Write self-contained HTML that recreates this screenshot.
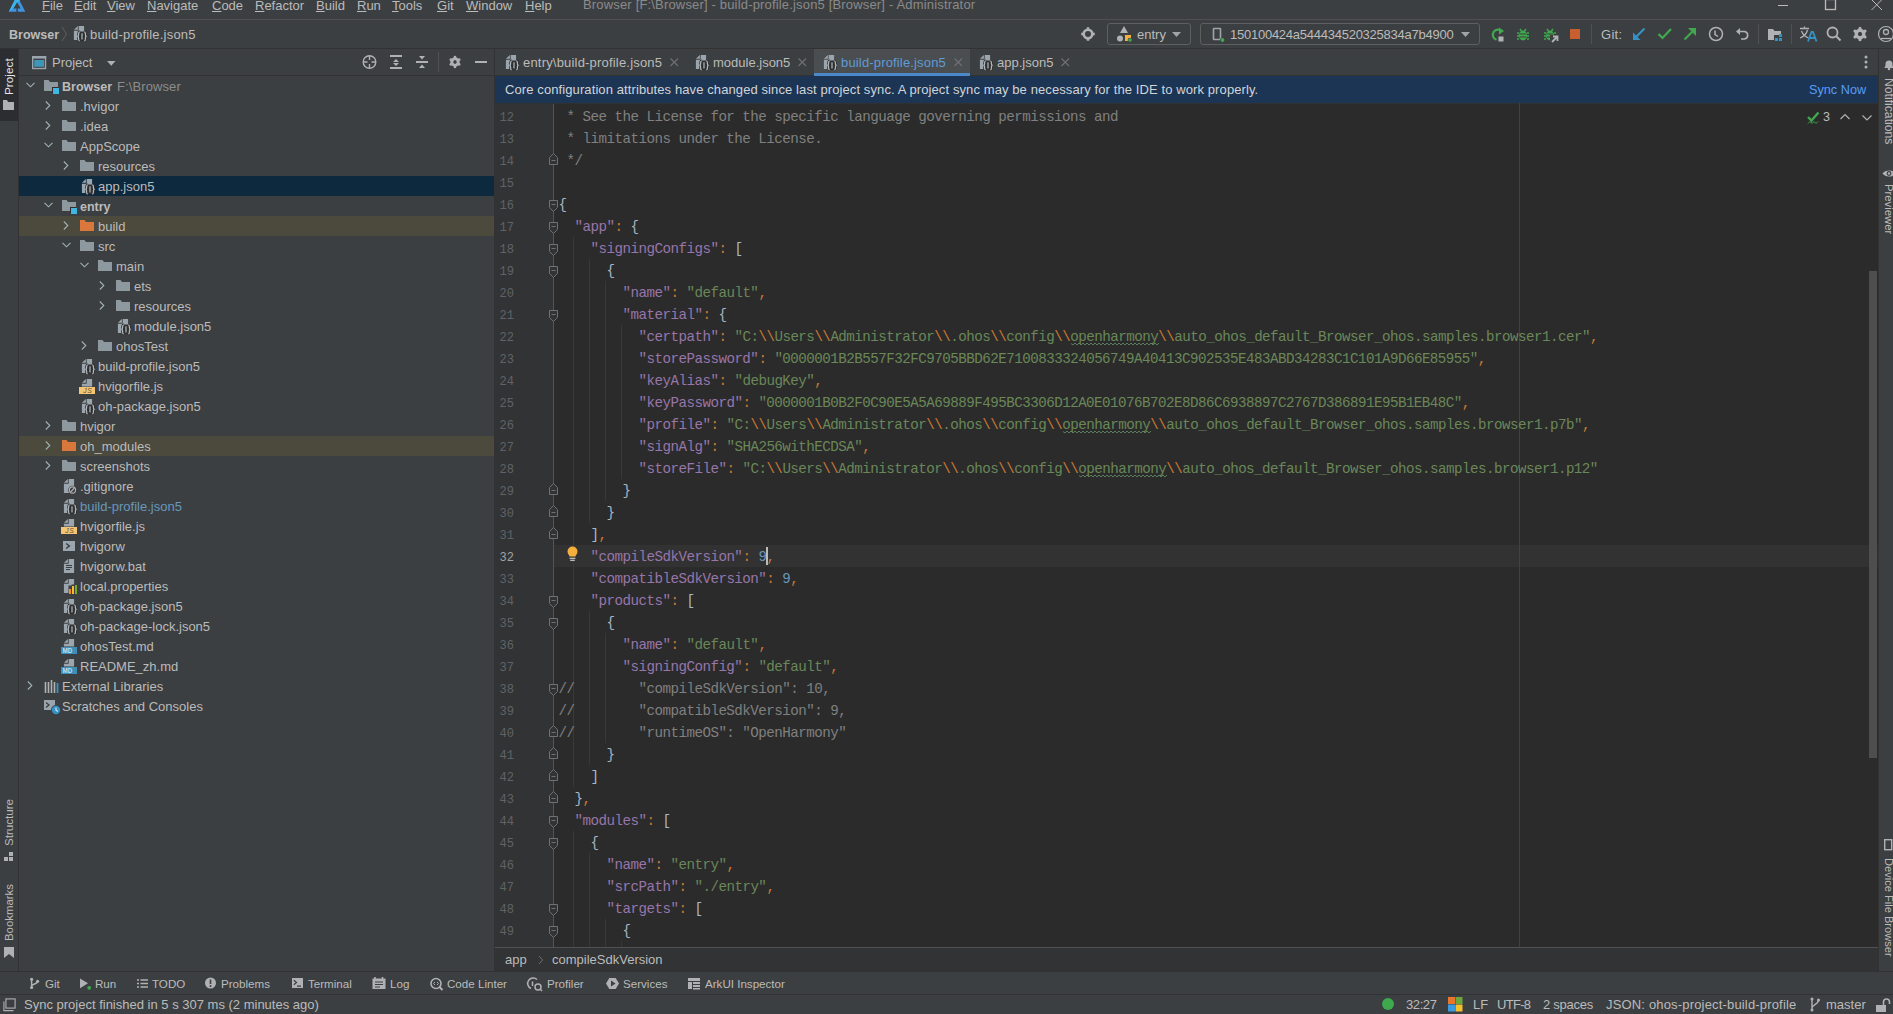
<!DOCTYPE html><html><head><meta charset="utf-8"><title>DevEco</title><style>
*{margin:0;padding:0;box-sizing:border-box}
html,body{width:1893px;height:1014px;overflow:hidden;background:#3c3f41;font-family:"Liberation Sans",sans-serif;font-size:13px;color:#bbbbbb;position:relative}
.a{position:absolute}
.t{position:absolute;white-space:pre;line-height:16px}
.code{position:absolute;white-space:pre;font-family:"Liberation Mono",monospace;font-size:14.2px;letter-spacing:-0.52px;line-height:22px;color:#a9b7c6}
.k{color:#9876aa}.s{color:#6a8759}.n{color:#6897bb}.p{color:#cc7832}.c{color:#808080}
.ln{position:absolute;font-family:"Liberation Mono",monospace;font-size:12px;color:#606366;text-align:right;width:30px;line-height:22px}
svg{position:absolute;overflow:visible}
.vt{position:absolute;white-space:pre;line-height:14px;font-size:12px;transform-origin:0 0}
</style></head><body>
<div class="a" style="left:0px;top:19px;width:1893px;height:1px;background:#505050;"></div>
<div class="a" style="left:0px;top:48px;width:1893px;height:1px;background:#323232;"></div>
<div class="a" style="left:0px;top:49px;width:18px;height:922px;background:#3c3f41;"></div>
<div class="a" style="left:18px;top:49px;width:1px;height:922px;background:#323232;"></div>
<div class="a" style="left:0px;top:49px;width:18px;height:72px;background:#2b2d30;"></div>
<div class="a" style="left:19px;top:75px;width:475px;height:1px;background:#323232;"></div>
<div class="a" style="left:494px;top:49px;width:1px;height:922px;background:#323232;"></div>
<div class="a" style="left:495px;top:49px;width:1383px;height:26px;background:#3c3f41;"></div>
<div class="a" style="left:495px;top:75px;width:1383px;height:1px;background:#323232;"></div>
<div class="a" style="left:814px;top:49px;width:156px;height:26px;background:#4b4e50;"></div>
<div class="a" style="left:814px;top:73px;width:156px;height:3px;background:#4a88c7;"></div>
<div class="a" style="left:495px;top:76px;width:1383px;height:27px;background:#1d3554;"></div>
<div class="a" style="left:495px;top:103px;width:58px;height:844px;background:#313335;"></div>
<div class="a" style="left:553px;top:103px;width:1px;height:844px;background:#555555;"></div>
<div class="a" style="left:554px;top:103px;width:1324px;height:844px;background:#2b2b2b;"></div>
<div class="a" style="left:495px;top:103px;width:1383px;height:1px;background:#303030;"></div>
<div class="a" style="left:1519px;top:103px;width:1px;height:844px;background:#414141;"></div>
<div class="a" style="left:495px;top:947px;width:1383px;height:1px;background:#515151;"></div>
<div class="a" style="left:495px;top:948px;width:1383px;height:23px;background:#313335;"></div>
<div class="a" style="left:1878px;top:49px;width:1px;height:922px;background:#323232;"></div>
<div class="a" style="left:1879px;top:49px;width:14px;height:922px;background:#3c3f41;"></div>
<div class="a" style="left:0px;top:971px;width:1893px;height:1px;background:#323232;"></div>
<div class="a" style="left:0px;top:994px;width:1893px;height:1px;background:#323232;"></div>
<svg style="left:8px;top:0px" width="18" height="13" viewBox="0 0 18 13"><path d="M9 -4.5L17.3 11.8H.8Z M9 2.2L5.2 8.4H12.8Z" fill="#3f93e0" fill-rule="evenodd"/><path d="M9 -4.5L12 1.3L9 2.2L5.2 8.4L.8 11.8Z" fill="#3bb4ee"/><rect x="8.4" y="8.2" width="1.4" height="4" fill="#3c3f41"/></svg>
<div class="t" style="left:42px;top:-2px;color:#bbbbbb"><span style="text-decoration:underline;text-underline-offset:1px">F</span>ile</div>
<div class="t" style="left:74px;top:-2px;color:#bbbbbb"><span style="text-decoration:underline;text-underline-offset:1px">E</span>dit</div>
<div class="t" style="left:107px;top:-2px;color:#bbbbbb"><span style="text-decoration:underline;text-underline-offset:1px">V</span>iew</div>
<div class="t" style="left:147px;top:-2px;color:#bbbbbb"><span style="text-decoration:underline;text-underline-offset:1px">N</span>avigate</div>
<div class="t" style="left:212px;top:-2px;color:#bbbbbb"><span style="text-decoration:underline;text-underline-offset:1px">C</span>ode</div>
<div class="t" style="left:255px;top:-2px;color:#bbbbbb"><span style="text-decoration:underline;text-underline-offset:1px">R</span>efactor</div>
<div class="t" style="left:316px;top:-2px;color:#bbbbbb"><span style="text-decoration:underline;text-underline-offset:1px">B</span>uild</div>
<div class="t" style="left:357px;top:-2px;color:#bbbbbb"><span style="text-decoration:underline;text-underline-offset:1px">R</span>un</div>
<div class="t" style="left:392px;top:-2px;color:#bbbbbb"><span style="text-decoration:underline;text-underline-offset:1px">T</span>ools</div>
<div class="t" style="left:437px;top:-2px;color:#bbbbbb"><span style="text-decoration:underline;text-underline-offset:1px">G</span>it</div>
<div class="t" style="left:466px;top:-2px;color:#bbbbbb"><span style="text-decoration:underline;text-underline-offset:1px">W</span>indow</div>
<div class="t" style="left:525px;top:-2px;color:#bbbbbb"><span style="text-decoration:underline;text-underline-offset:1px">H</span>elp</div>
<div class="t" style="left:583px;top:-3px;color:#8a8a8a;letter-spacing:.17px">Browser [F:\Browser] - build-profile.json5 [Browser] - Administrator</div>
<div class="a" style="left:1778px;top:5px;width:10px;height:1px;background:#bbbbbb;"></div>
<svg style="left:1825px;top:0px" width="11" height="11" viewBox="0 0 11 11"><rect x=".5" y="-.5" width="10" height="10" fill="none" stroke="#bbbbbb" stroke-width="1.3"/></svg>
<svg style="left:1871px;top:0px" width="12" height="11" viewBox="0 0 12 11"><path d="M.5 -.5L11 10M11 -.5L.5 10" stroke="#bbbbbb" stroke-width="1"/></svg>
<div class="t" style="left:9px;top:27px;font-weight:bold;font-size:12.5px">Browser</div>
<svg style="left:61px;top:26px" width="8" height="16" viewBox="0 0 8 16"><path d="M1 1L5.5 8L1 15" fill="none" stroke="#5e6062" stroke-width="1"/></svg>
<svg style="left:71px;top:24px" width="16" height="16" viewBox="0 0 16 16"><path d="M2.9 5.7L6.9 1.9V5.7Z" fill="#9aa5ad"/><path d="M7.7 2H13.1V16H2.9V6.8H7.7Z" fill="#9aa5ad"/><rect x="6.6" y="7.6" width="8.8" height="9.6" rx="2.5" fill="#2f3133"/><path d="M8.8 7.8C7.7 7.8 7.6 8.6 7.6 9.8V11C7.6 11.9 7.1 12.4 6.3 12.4C7.1 12.4 7.6 12.9 7.6 13.8V15C7.6 16.2 7.7 17 8.8 17M13.2 7.8C14.3 7.8 14.4 8.6 14.4 9.8V11C14.4 11.9 14.9 12.4 15.7 12.4C14.9 12.4 14.4 12.9 14.4 13.8V15C14.4 16.2 14.3 17 13.2 17M11 9.3V15.5" fill="none" stroke="#2f3133" stroke-width="2.4"/><path d="M8.8 7.8C7.7 7.8 7.6 8.6 7.6 9.8V11C7.6 11.9 7.1 12.4 6.3 12.4C7.1 12.4 7.6 12.9 7.6 13.8V15C7.6 16.2 7.7 17 8.8 17M13.2 7.8C14.3 7.8 14.4 8.6 14.4 9.8V11C14.4 11.9 14.9 12.4 15.7 12.4C14.9 12.4 14.4 12.9 14.4 13.8V15C14.4 16.2 14.3 17 13.2 17M11 9.3V15.5" fill="none" stroke="#b4b9bd" stroke-width="1.2"/></svg>
<div class="t" style="left:90px;top:27px;letter-spacing:.2px">build-profile.json5</div>
<svg style="left:1080px;top:26px" width="16" height="16" viewBox="0 0 16 16"><circle cx="8" cy="8" r="4.3" fill="none" stroke="#afb1b3" stroke-width="2.6"/><path d="M8 1.2V3.2M8 12.8V14.8M1.2 8H3.2M12.8 8H14.8" stroke="#afb1b3" stroke-width="2.6"/></svg>
<div class="a" style="left:1107px;top:23px;width:84px;height:22px;border:1px solid #5e6060;border-radius:3px"></div>
<svg style="left:1116px;top:25px" width="18" height="18" viewBox="0 0 18 18"><path d="M8 1L12 8H4Z" fill="#afb1b3"/><circle cx="4" cy="13.5" r="3" fill="#afb1b3"/><rect x="9" y="10" width="6" height="6" fill="#f4af3d"/><circle cx="14" cy="15" r="2.3" fill="#3c3f41"/><circle cx="14" cy="15" r="1.8" fill="#3fa94e"/></svg>
<div class="t" style="left:1137px;top:27px;">entry</div>
<svg style="left:1172px;top:32px" width="10" height="6" viewBox="0 0 10 6"><path d="M0 0H9L4.5 5Z" fill="#9da5a8"/></svg>
<div class="a" style="left:1200px;top:23px;width:280px;height:22px;border:1px solid #5e6060;border-radius:3px"></div>
<svg style="left:1212px;top:27px" width="14" height="16" viewBox="0 0 14 16"><rect x="1.5" y="1.5" width="7" height="11" fill="none" stroke="#9da5a8" stroke-width="1.6" rx=".5"/><circle cx="10.5" cy="13" r="2.5" fill="#3c3f41"/><circle cx="10.5" cy="13" r="1.9" fill="#3fa94e"/></svg>
<div class="t" style="left:1230px;top:27px;letter-spacing:-.25px">150100424a544434520325834a7b4900</div>
<svg style="left:1461px;top:32px" width="10" height="6" viewBox="0 0 10 6"><path d="M0 0H9L4.5 5Z" fill="#9da5a8"/></svg>
<svg style="left:1490px;top:26px" width="16" height="16" viewBox="0 0 16 16"><path d="M12 5.5A5.2 5.2 0 1 0 6.5 13.8" fill="none" stroke="#3fa94e" stroke-width="2.2"/><path d="M9 1.5L14 5L9 8.5Z" fill="#3fa94e"/><rect x="8.5" y="10.5" width="5" height="5" fill="#afb1b3"/></svg>
<svg style="left:1516px;top:27px" width="16" height="16" viewBox="0 0 16 16"><ellipse cx="7" cy="8.5" rx="4" ry="5" fill="#3fa94e"/><path d="M4 2L5.5 4M10 2L8.5 4M1 6H3M1 9H3M1 12H3M11 6H13M11 9H13M11 12H13" stroke="#3fa94e" stroke-width="1.5"/><path d="M4 7H10M4 10H10" stroke="#3c3f41" stroke-width="1"/></svg>
<svg style="left:1543px;top:27px" width="16" height="16" viewBox="0 0 16 16"><ellipse cx="7" cy="8.5" rx="4" ry="5" fill="#3fa94e"/><path d="M4 2L5.5 4M10 2L8.5 4M1 6H3M1 9H3M1 12H3M11 6H13M11 9H13M11 12H13" stroke="#3fa94e" stroke-width="1.5"/><path d="M4 7H10M4 10H10" stroke="#3c3f41" stroke-width="1"/><rect x="7" y="8" width="9" height="9" fill="#3c3f41"/><path d="M9 15L14.5 9.5M10 9.5H14.5V14" fill="none" stroke="#afb1b3" stroke-width="1.8"/></svg>
<div class="a" style="left:1570px;top:29px;width:10px;height:10px;background:#c75f2e;"></div>
<div class="a" style="left:1591px;top:24px;width:1px;height:20px;background:#515151;"></div>
<div class="t" style="left:1601px;top:27px;letter-spacing:.3px">Git:</div>
<svg style="left:1632px;top:27px" width="14" height="14" viewBox="0 0 14 14"><path d="M12.5 1.5L3 11" stroke="#3592c4" stroke-width="2.2"/><path d="M1 5.5V13H8.5Z" fill="#3592c4"/></svg>
<svg style="left:1657px;top:27px" width="16" height="14" viewBox="0 0 16 14"><path d="M1.5 7L5.5 11L14 2" fill="none" stroke="#3fa94e" stroke-width="2.2"/></svg>
<svg style="left:1683px;top:27px" width="14" height="14" viewBox="0 0 14 14"><path d="M1.5 12.5L11 3" stroke="#3fa94e" stroke-width="2.2"/><path d="M5 1H13V9Z" fill="#3fa94e"/></svg>
<svg style="left:1708px;top:26px" width="16" height="16" viewBox="0 0 16 16"><circle cx="8" cy="8" r="6.5" fill="none" stroke="#afb1b3" stroke-width="1.5"/><path d="M7 4.5V8.5L10 10.5" fill="none" stroke="#afb1b3" stroke-width="1.5"/></svg>
<svg style="left:1735px;top:26px" width="16" height="16" viewBox="0 0 16 16"><path d="M3 5.5H9.5A3.8 3.8 0 0 1 9.5 13H6" fill="none" stroke="#afb1b3" stroke-width="1.6"/><path d="M1 5.5L5 2V9Z" fill="#afb1b3"/></svg>
<div class="a" style="left:1758px;top:24px;width:1px;height:20px;background:#515151;"></div>
<svg style="left:1767px;top:27px" width="16" height="16" viewBox="0 0 16 16"><path d="M1 2H6L7.5 4H14V13H1Z" fill="#afb1b3"/><rect x="7" y="8" width="8" height="8" fill="#3c3f41"/><rect x="8" y="11" width="3" height="3" fill="#3592c4"/><rect x="12" y="11" width="3" height="3" fill="#3592c4"/><rect x="12" y="7" width="3" height="3" fill="#3592c4"/></svg>
<div class="a" style="left:1791px;top:24px;width:1px;height:20px;background:#515151;"></div>
<svg style="left:1799px;top:26px" width="18" height="16" viewBox="0 0 18 16"><path d="M1 2.5H10M5.5 0.5V2.5M2.5 5C4 9 6 10.5 9.5 12M8.5 4C7.5 8 5 10.5 1 12" fill="none" stroke="#afb1b3" stroke-width="1.3"/><path d="M9 15.5L12.5 6H14L17.5 15.5M10.5 12H16" fill="none" stroke="#3592c4" stroke-width="1.8"/></svg>
<svg style="left:1826px;top:26px" width="16" height="16" viewBox="0 0 16 16"><circle cx="6.5" cy="6.5" r="5" fill="none" stroke="#afb1b3" stroke-width="1.8"/><path d="M10 10L14.5 14.5" stroke="#afb1b3" stroke-width="2"/></svg>
<svg style="left:1852px;top:26px" width="16" height="16" viewBox="0 0 16 16"><circle cx="8" cy="8" r="3.84" fill="none" stroke="#afb1b3" stroke-width="3.20"/><path d="M8.00 11.52L8.00 13.80M4.95 9.76L2.98 10.90M4.95 6.24L2.98 5.10M8.00 4.48L8.00 2.20M11.05 6.24L13.02 5.10M11.05 9.76L13.02 10.90" stroke="#afb1b3" stroke-width="3.07" stroke-linecap="round"/></svg>
<svg style="left:1877px;top:26px" width="18" height="18" viewBox="0 0 18 18"><circle cx="9" cy="8" r="7.5" fill="none" stroke="#afb1b3" stroke-width="1.2"/><circle cx="9" cy="6" r="2.5" fill="none" stroke="#afb1b3" stroke-width="1.3"/><path d="M4 12.5H14" stroke="#afb1b3" stroke-width="1.3"/></svg>
<div class="vt" style="left:2px;top:95px;transform:rotate(-90deg);color:#e8e8e8;font-size:11.8px">Project</div>
<svg style="left:3px;top:100px" width="12" height="11" viewBox="0 0 12 11"><path d="M0 0H4L5 2H11V10H0Z" fill="#afb1b3"/></svg>
<div class="vt" style="left:2px;top:846px;transform:rotate(-90deg);color:#bbbbbb;font-size:11.6px">Structure</div>
<svg style="left:4px;top:852px" width="10" height="10" viewBox="0 0 10 10"><rect x="5" y="0" width="4" height="4" fill="#afb1b3"/><rect x="0" y="5" width="4" height="4" fill="#afb1b3"/><rect x="5" y="5" width="4" height="4" fill="#afb1b3"/></svg>
<div class="vt" style="left:2px;top:941px;transform:rotate(-90deg);color:#bbbbbb;font-size:11.4px">Bookmarks</div>
<svg style="left:4px;top:947px" width="10" height="11" viewBox="0 0 10 11"><path d="M0 0H10V11L5 7L0 11Z" fill="#afb1b3"/></svg>
<svg style="left:32px;top:56px" width="15" height="14" viewBox="0 0 15 14"><rect x=".7" y=".7" width="12.8" height="11.8" fill="none" stroke="#9aa5ad" stroke-width="1.4"/><rect x="0" y="0" width="14.2" height="2.6" fill="#9aa5ad"/><rect x="2.2" y="4" width="9.8" height="6.8" fill="#3e97b8"/></svg>
<div class="t" style="left:52px;top:55px;font-size:13px">Project</div>
<svg style="left:107px;top:61px" width="10" height="6" viewBox="0 0 10 6"><path d="M0 0H8.5L4.25 4.8Z" fill="#afb1b3"/></svg>
<svg style="left:362px;top:55px" width="16" height="16" viewBox="0 0 16 16"><circle cx="7.5" cy="7" r="6.3" fill="none" stroke="#afb1b3" stroke-width="1.4"/><path d="M7.5 .5V5M7.5 9V13.5M1 7H5.5M9.5 7H14" stroke="#afb1b3" stroke-width="1.4"/></svg>
<svg style="left:390px;top:55px" width="13" height="14" viewBox="0 0 13 14"><path d="M0 1H12M0 13H12" stroke="#afb1b3" stroke-width="2"/><path d="M3 7H9L6 4Z M3 8H9L6 11Z" fill="#afb1b3"/></svg>
<svg style="left:416px;top:55px" width="13" height="14" viewBox="0 0 13 14"><path d="M0 7H12" stroke="#afb1b3" stroke-width="2"/><path d="M3 1H9L6 4.5Z M3 13H9L6 9.5Z" fill="#afb1b3"/></svg>
<div class="a" style="left:438px;top:52px;width:1px;height:20px;background:#515151;"></div>
<svg style="left:447px;top:54px" width="16" height="16" viewBox="0 0 16 16"><circle cx="8" cy="8" r="3.30" fill="none" stroke="#afb1b3" stroke-width="2.75"/><path d="M8.00 11.03L8.00 12.90M5.38 9.51L3.76 10.45M5.38 6.49L3.76 5.55M8.00 4.97L8.00 3.10M10.62 6.49L12.24 5.55M10.62 9.51L12.24 10.45" stroke="#afb1b3" stroke-width="2.64" stroke-linecap="round"/></svg>
<div class="a" style="left:475px;top:61px;width:12px;height:2px;background:#afb1b3;"></div>
<div class="a" style="left:19px;top:176px;width:475px;height:20px;background:#0d293e;"></div>
<div class="t" style="left:117px;top:79px;color:#8c8c8c;letter-spacing:.1px">F:\Browser</div>
<div class="a" style="left:19px;top:216px;width:475px;height:20px;background:#4c493d;"></div>
<div class="a" style="left:19px;top:436px;width:475px;height:20px;background:#4c493d;"></div>
<svg style="left:25.5px;top:82.4px" width="10" height="6" viewBox="0 0 10 6"><path d="M.5 .8L4.5 4.8L8.5 .8" fill="none" stroke="#9fb2b3" stroke-width="1.1"/></svg>
<svg style="left:43px;top:78px" width="16" height="16" viewBox="0 0 16 16"><path d="M1 2H5.5L7 4H15V13H1Z" fill="#8d989f"/><rect x="9" y="9" width="6" height="6" fill="#2b2d30"/><rect x="10" y="10" width="6" height="6" fill="#40b6e0"/></svg>
<div class="t" style="left:62px;top:79px;"><b style="font-size:12.5px">Browser</b></div>
<svg style="left:45.0px;top:101.3px" width="6" height="10" viewBox="0 0 6 10"><path d="M.8 .5L4.8 4.5L.8 8.5" fill="none" stroke="#9fb2b3" stroke-width="1.1"/></svg>
<svg style="left:61px;top:98px" width="16" height="16" viewBox="0 0 16 16"><path d="M1 2H5.5L7 4H15V13H1Z" fill="#8d989f"/></svg>
<div class="t" style="left:80px;top:99px;">.hvigor</div>
<svg style="left:45.0px;top:121.3px" width="6" height="10" viewBox="0 0 6 10"><path d="M.8 .5L4.8 4.5L.8 8.5" fill="none" stroke="#9fb2b3" stroke-width="1.1"/></svg>
<svg style="left:61px;top:118px" width="16" height="16" viewBox="0 0 16 16"><path d="M1 2H5.5L7 4H15V13H1Z" fill="#8d989f"/></svg>
<div class="t" style="left:80px;top:119px;">.idea</div>
<svg style="left:43.5px;top:142.4px" width="10" height="6" viewBox="0 0 10 6"><path d="M.5 .8L4.5 4.8L8.5 .8" fill="none" stroke="#9fb2b3" stroke-width="1.1"/></svg>
<svg style="left:61px;top:138px" width="16" height="16" viewBox="0 0 16 16"><path d="M1 2H5.5L7 4H15V13H1Z" fill="#8d989f"/></svg>
<div class="t" style="left:80px;top:139px;">AppScope</div>
<svg style="left:63.0px;top:161.3px" width="6" height="10" viewBox="0 0 6 10"><path d="M.8 .5L4.8 4.5L.8 8.5" fill="none" stroke="#9fb2b3" stroke-width="1.1"/></svg>
<svg style="left:79px;top:158px" width="16" height="16" viewBox="0 0 16 16"><path d="M1 2H5.5L7 4H15V13H1Z" fill="#8d989f"/></svg>
<div class="t" style="left:98px;top:159px;">resources</div>
<svg style="left:79px;top:177px" width="16" height="16" viewBox="0 0 16 16"><path d="M2.9 5.7L6.9 1.9V5.7Z" fill="#9aa5ad"/><path d="M7.7 2H13.1V16H2.9V6.8H7.7Z" fill="#9aa5ad"/><rect x="6.6" y="7.6" width="8.8" height="9.6" rx="2.5" fill="#2f3133"/><path d="M8.8 7.8C7.7 7.8 7.6 8.6 7.6 9.8V11C7.6 11.9 7.1 12.4 6.3 12.4C7.1 12.4 7.6 12.9 7.6 13.8V15C7.6 16.2 7.7 17 8.8 17M13.2 7.8C14.3 7.8 14.4 8.6 14.4 9.8V11C14.4 11.9 14.9 12.4 15.7 12.4C14.9 12.4 14.4 12.9 14.4 13.8V15C14.4 16.2 14.3 17 13.2 17M11 9.3V15.5" fill="none" stroke="#2f3133" stroke-width="2.4"/><path d="M8.8 7.8C7.7 7.8 7.6 8.6 7.6 9.8V11C7.6 11.9 7.1 12.4 6.3 12.4C7.1 12.4 7.6 12.9 7.6 13.8V15C7.6 16.2 7.7 17 8.8 17M13.2 7.8C14.3 7.8 14.4 8.6 14.4 9.8V11C14.4 11.9 14.9 12.4 15.7 12.4C14.9 12.4 14.4 12.9 14.4 13.8V15C14.4 16.2 14.3 17 13.2 17M11 9.3V15.5" fill="none" stroke="#b4b9bd" stroke-width="1.2"/></svg>
<div class="t" style="left:98px;top:179px;">app.json5</div>
<svg style="left:43.5px;top:202.4px" width="10" height="6" viewBox="0 0 10 6"><path d="M.5 .8L4.5 4.8L8.5 .8" fill="none" stroke="#9fb2b3" stroke-width="1.1"/></svg>
<svg style="left:61px;top:198px" width="16" height="16" viewBox="0 0 16 16"><path d="M1 2H5.5L7 4H15V13H1Z" fill="#8d989f"/><rect x="9" y="9" width="6" height="6" fill="#2b2d30"/><rect x="10" y="10" width="6" height="6" fill="#40b6e0"/></svg>
<div class="t" style="left:80px;top:199px;"><b style="font-size:12.5px">entry</b></div>
<svg style="left:63.0px;top:221.3px" width="6" height="10" viewBox="0 0 6 10"><path d="M.8 .5L4.8 4.5L.8 8.5" fill="none" stroke="#9fb2b3" stroke-width="1.1"/></svg>
<svg style="left:79px;top:218px" width="16" height="16" viewBox="0 0 16 16"><path d="M1 2H5.5L7 4H15V13H1Z" fill="#d9773c"/></svg>
<div class="t" style="left:98px;top:219px;">build</div>
<svg style="left:61.5px;top:242.4px" width="10" height="6" viewBox="0 0 10 6"><path d="M.5 .8L4.5 4.8L8.5 .8" fill="none" stroke="#9fb2b3" stroke-width="1.1"/></svg>
<svg style="left:79px;top:238px" width="16" height="16" viewBox="0 0 16 16"><path d="M1 2H5.5L7 4H15V13H1Z" fill="#8d989f"/></svg>
<div class="t" style="left:98px;top:239px;">src</div>
<svg style="left:79.5px;top:262.4px" width="10" height="6" viewBox="0 0 10 6"><path d="M.5 .8L4.5 4.8L8.5 .8" fill="none" stroke="#9fb2b3" stroke-width="1.1"/></svg>
<svg style="left:97px;top:258px" width="16" height="16" viewBox="0 0 16 16"><path d="M1 2H5.5L7 4H15V13H1Z" fill="#8d989f"/></svg>
<div class="t" style="left:116px;top:259px;">main</div>
<svg style="left:99.0px;top:281.3px" width="6" height="10" viewBox="0 0 6 10"><path d="M.8 .5L4.8 4.5L.8 8.5" fill="none" stroke="#9fb2b3" stroke-width="1.1"/></svg>
<svg style="left:115px;top:278px" width="16" height="16" viewBox="0 0 16 16"><path d="M1 2H5.5L7 4H15V13H1Z" fill="#8d989f"/></svg>
<div class="t" style="left:134px;top:279px;">ets</div>
<svg style="left:99.0px;top:301.3px" width="6" height="10" viewBox="0 0 6 10"><path d="M.8 .5L4.8 4.5L.8 8.5" fill="none" stroke="#9fb2b3" stroke-width="1.1"/></svg>
<svg style="left:115px;top:298px" width="16" height="16" viewBox="0 0 16 16"><path d="M1 2H5.5L7 4H15V13H1Z" fill="#8d989f"/></svg>
<div class="t" style="left:134px;top:299px;">resources</div>
<svg style="left:115px;top:317px" width="16" height="16" viewBox="0 0 16 16"><path d="M2.9 5.7L6.9 1.9V5.7Z" fill="#9aa5ad"/><path d="M7.7 2H13.1V16H2.9V6.8H7.7Z" fill="#9aa5ad"/><rect x="6.6" y="7.6" width="8.8" height="9.6" rx="2.5" fill="#2f3133"/><path d="M8.8 7.8C7.7 7.8 7.6 8.6 7.6 9.8V11C7.6 11.9 7.1 12.4 6.3 12.4C7.1 12.4 7.6 12.9 7.6 13.8V15C7.6 16.2 7.7 17 8.8 17M13.2 7.8C14.3 7.8 14.4 8.6 14.4 9.8V11C14.4 11.9 14.9 12.4 15.7 12.4C14.9 12.4 14.4 12.9 14.4 13.8V15C14.4 16.2 14.3 17 13.2 17M11 9.3V15.5" fill="none" stroke="#2f3133" stroke-width="2.4"/><path d="M8.8 7.8C7.7 7.8 7.6 8.6 7.6 9.8V11C7.6 11.9 7.1 12.4 6.3 12.4C7.1 12.4 7.6 12.9 7.6 13.8V15C7.6 16.2 7.7 17 8.8 17M13.2 7.8C14.3 7.8 14.4 8.6 14.4 9.8V11C14.4 11.9 14.9 12.4 15.7 12.4C14.9 12.4 14.4 12.9 14.4 13.8V15C14.4 16.2 14.3 17 13.2 17M11 9.3V15.5" fill="none" stroke="#b4b9bd" stroke-width="1.2"/></svg>
<div class="t" style="left:134px;top:319px;">module.json5</div>
<svg style="left:81.0px;top:341.3px" width="6" height="10" viewBox="0 0 6 10"><path d="M.8 .5L4.8 4.5L.8 8.5" fill="none" stroke="#9fb2b3" stroke-width="1.1"/></svg>
<svg style="left:97px;top:338px" width="16" height="16" viewBox="0 0 16 16"><path d="M1 2H5.5L7 4H15V13H1Z" fill="#8d989f"/></svg>
<div class="t" style="left:116px;top:339px;">ohosTest</div>
<svg style="left:79px;top:357px" width="16" height="16" viewBox="0 0 16 16"><path d="M2.9 5.7L6.9 1.9V5.7Z" fill="#9aa5ad"/><path d="M7.7 2H13.1V16H2.9V6.8H7.7Z" fill="#9aa5ad"/><rect x="6.6" y="7.6" width="8.8" height="9.6" rx="2.5" fill="#2f3133"/><path d="M8.8 7.8C7.7 7.8 7.6 8.6 7.6 9.8V11C7.6 11.9 7.1 12.4 6.3 12.4C7.1 12.4 7.6 12.9 7.6 13.8V15C7.6 16.2 7.7 17 8.8 17M13.2 7.8C14.3 7.8 14.4 8.6 14.4 9.8V11C14.4 11.9 14.9 12.4 15.7 12.4C14.9 12.4 14.4 12.9 14.4 13.8V15C14.4 16.2 14.3 17 13.2 17M11 9.3V15.5" fill="none" stroke="#2f3133" stroke-width="2.4"/><path d="M8.8 7.8C7.7 7.8 7.6 8.6 7.6 9.8V11C7.6 11.9 7.1 12.4 6.3 12.4C7.1 12.4 7.6 12.9 7.6 13.8V15C7.6 16.2 7.7 17 8.8 17M13.2 7.8C14.3 7.8 14.4 8.6 14.4 9.8V11C14.4 11.9 14.9 12.4 15.7 12.4C14.9 12.4 14.4 12.9 14.4 13.8V15C14.4 16.2 14.3 17 13.2 17M11 9.3V15.5" fill="none" stroke="#b4b9bd" stroke-width="1.2"/></svg>
<div class="t" style="left:98px;top:359px;">build-profile.json5</div>
<svg style="left:79px;top:377px" width="16" height="16" viewBox="0 0 16 16"><path d="M2.9 5.7L6.9 1.9V5.7Z" fill="#9aa5ad"/><path d="M7.7 2H13.1V9.5H2.9V6.8H7.7Z" fill="#9aa5ad"/><rect x="0" y="10" width="16" height="7" fill="#f4c574"/><text x="4.2" y="16.2" font-size="6.8" font-family="Liberation Sans" fill="#6b5432" font-style="italic" letter-spacing=".6">JS</text></svg>
<div class="t" style="left:98px;top:379px;">hvigorfile.js</div>
<svg style="left:79px;top:397px" width="16" height="16" viewBox="0 0 16 16"><path d="M2.9 5.7L6.9 1.9V5.7Z" fill="#9aa5ad"/><path d="M7.7 2H13.1V16H2.9V6.8H7.7Z" fill="#9aa5ad"/><rect x="6.6" y="7.6" width="8.8" height="9.6" rx="2.5" fill="#2f3133"/><path d="M8.8 7.8C7.7 7.8 7.6 8.6 7.6 9.8V11C7.6 11.9 7.1 12.4 6.3 12.4C7.1 12.4 7.6 12.9 7.6 13.8V15C7.6 16.2 7.7 17 8.8 17M13.2 7.8C14.3 7.8 14.4 8.6 14.4 9.8V11C14.4 11.9 14.9 12.4 15.7 12.4C14.9 12.4 14.4 12.9 14.4 13.8V15C14.4 16.2 14.3 17 13.2 17M11 9.3V15.5" fill="none" stroke="#2f3133" stroke-width="2.4"/><path d="M8.8 7.8C7.7 7.8 7.6 8.6 7.6 9.8V11C7.6 11.9 7.1 12.4 6.3 12.4C7.1 12.4 7.6 12.9 7.6 13.8V15C7.6 16.2 7.7 17 8.8 17M13.2 7.8C14.3 7.8 14.4 8.6 14.4 9.8V11C14.4 11.9 14.9 12.4 15.7 12.4C14.9 12.4 14.4 12.9 14.4 13.8V15C14.4 16.2 14.3 17 13.2 17M11 9.3V15.5" fill="none" stroke="#b4b9bd" stroke-width="1.2"/></svg>
<div class="t" style="left:98px;top:399px;">oh-package.json5</div>
<svg style="left:45.0px;top:421.3px" width="6" height="10" viewBox="0 0 6 10"><path d="M.8 .5L4.8 4.5L.8 8.5" fill="none" stroke="#9fb2b3" stroke-width="1.1"/></svg>
<svg style="left:61px;top:418px" width="16" height="16" viewBox="0 0 16 16"><path d="M1 2H5.5L7 4H15V13H1Z" fill="#8d989f"/></svg>
<div class="t" style="left:80px;top:419px;">hvigor</div>
<svg style="left:45.0px;top:441.3px" width="6" height="10" viewBox="0 0 6 10"><path d="M.8 .5L4.8 4.5L.8 8.5" fill="none" stroke="#9fb2b3" stroke-width="1.1"/></svg>
<svg style="left:61px;top:438px" width="16" height="16" viewBox="0 0 16 16"><path d="M1 2H5.5L7 4H15V13H1Z" fill="#d9773c"/></svg>
<div class="t" style="left:80px;top:439px;">oh_modules</div>
<svg style="left:45.0px;top:461.3px" width="6" height="10" viewBox="0 0 6 10"><path d="M.8 .5L4.8 4.5L.8 8.5" fill="none" stroke="#9fb2b3" stroke-width="1.1"/></svg>
<svg style="left:61px;top:458px" width="16" height="16" viewBox="0 0 16 16"><path d="M1 2H5.5L7 4H15V13H1Z" fill="#8d989f"/></svg>
<div class="t" style="left:80px;top:459px;">screenshots</div>
<svg style="left:61px;top:477px" width="16" height="16" viewBox="0 0 16 16"><path d="M2.9 5.7L6.9 1.9V5.7Z" fill="#9aa5ad"/><path d="M7.7 2H13.1V16H2.9V6.8H7.7Z" fill="#9aa5ad"/><circle cx="11.5" cy="13" r="4.3" fill="#3c3f41"/><circle cx="11.5" cy="13" r="3.1" fill="none" stroke="#afb1b3" stroke-width="1.1"/><path d="M9.6 15L13.4 11" stroke="#afb1b3" stroke-width="1.1"/></svg>
<div class="t" style="left:80px;top:479px;">.gitignore</div>
<svg style="left:61px;top:497px" width="16" height="16" viewBox="0 0 16 16"><path d="M2.9 5.7L6.9 1.9V5.7Z" fill="#9aa5ad"/><path d="M7.7 2H13.1V16H2.9V6.8H7.7Z" fill="#9aa5ad"/><rect x="6.6" y="7.6" width="8.8" height="9.6" rx="2.5" fill="#2f3133"/><path d="M8.8 7.8C7.7 7.8 7.6 8.6 7.6 9.8V11C7.6 11.9 7.1 12.4 6.3 12.4C7.1 12.4 7.6 12.9 7.6 13.8V15C7.6 16.2 7.7 17 8.8 17M13.2 7.8C14.3 7.8 14.4 8.6 14.4 9.8V11C14.4 11.9 14.9 12.4 15.7 12.4C14.9 12.4 14.4 12.9 14.4 13.8V15C14.4 16.2 14.3 17 13.2 17M11 9.3V15.5" fill="none" stroke="#2f3133" stroke-width="2.4"/><path d="M8.8 7.8C7.7 7.8 7.6 8.6 7.6 9.8V11C7.6 11.9 7.1 12.4 6.3 12.4C7.1 12.4 7.6 12.9 7.6 13.8V15C7.6 16.2 7.7 17 8.8 17M13.2 7.8C14.3 7.8 14.4 8.6 14.4 9.8V11C14.4 11.9 14.9 12.4 15.7 12.4C14.9 12.4 14.4 12.9 14.4 13.8V15C14.4 16.2 14.3 17 13.2 17M11 9.3V15.5" fill="none" stroke="#b4b9bd" stroke-width="1.2"/></svg>
<div class="t" style="left:80px;top:499px;"><span style="color:#6897bb">build-profile.json5</span></div>
<svg style="left:61px;top:517px" width="16" height="16" viewBox="0 0 16 16"><path d="M2.9 5.7L6.9 1.9V5.7Z" fill="#9aa5ad"/><path d="M7.7 2H13.1V9.5H2.9V6.8H7.7Z" fill="#9aa5ad"/><rect x="0" y="10" width="16" height="7" fill="#f4c574"/><text x="4.2" y="16.2" font-size="6.8" font-family="Liberation Sans" fill="#6b5432" font-style="italic" letter-spacing=".6">JS</text></svg>
<div class="t" style="left:80px;top:519px;">hvigorfile.js</div>
<svg style="left:61px;top:537px" width="16" height="16" viewBox="0 0 16 16"><rect x="2" y="4" width="12" height="10" fill="#9aa5ad"/><path d="M5.2 6.5L8.3 9L5.2 11.5" fill="none" stroke="#3c3f41" stroke-width="1.5"/></svg>
<div class="t" style="left:80px;top:539px;">hvigorw</div>
<svg style="left:61px;top:557px" width="16" height="16" viewBox="0 0 16 16"><path d="M2.9 5.7L6.9 1.9V5.7Z" fill="#9aa5ad"/><path d="M7.7 2H13.1V16H2.9V6.8H7.7Z" fill="#9aa5ad"/><path d="M5 8.5H11M5 10.5H11M5 12.5H9" stroke="#3c3f41" stroke-width="1"/></svg>
<div class="t" style="left:80px;top:559px;">hvigorw.bat</div>
<svg style="left:61px;top:577px" width="16" height="16" viewBox="0 0 16 16"><path d="M2.9 5.7L6.9 1.9V5.7Z" fill="#9aa5ad"/><path d="M7.7 2H13.1V16H2.9V6.8H7.7Z" fill="#9aa5ad"/><path d="M7.5 16.5V8.5H10.5V7.5H13.5V6.5H16.5V16.5Z" fill="#3c3f41"/><rect x="8" y="12" width="2" height="5" fill="#f98b1c"/><rect x="11" y="9" width="2" height="8" fill="#f4bf2e"/><rect x="14" y="8" width="2" height="9" fill="#7cab2c"/></svg>
<div class="t" style="left:80px;top:579px;">local.properties</div>
<svg style="left:61px;top:597px" width="16" height="16" viewBox="0 0 16 16"><path d="M2.9 5.7L6.9 1.9V5.7Z" fill="#9aa5ad"/><path d="M7.7 2H13.1V16H2.9V6.8H7.7Z" fill="#9aa5ad"/><rect x="6.6" y="7.6" width="8.8" height="9.6" rx="2.5" fill="#2f3133"/><path d="M8.8 7.8C7.7 7.8 7.6 8.6 7.6 9.8V11C7.6 11.9 7.1 12.4 6.3 12.4C7.1 12.4 7.6 12.9 7.6 13.8V15C7.6 16.2 7.7 17 8.8 17M13.2 7.8C14.3 7.8 14.4 8.6 14.4 9.8V11C14.4 11.9 14.9 12.4 15.7 12.4C14.9 12.4 14.4 12.9 14.4 13.8V15C14.4 16.2 14.3 17 13.2 17M11 9.3V15.5" fill="none" stroke="#2f3133" stroke-width="2.4"/><path d="M8.8 7.8C7.7 7.8 7.6 8.6 7.6 9.8V11C7.6 11.9 7.1 12.4 6.3 12.4C7.1 12.4 7.6 12.9 7.6 13.8V15C7.6 16.2 7.7 17 8.8 17M13.2 7.8C14.3 7.8 14.4 8.6 14.4 9.8V11C14.4 11.9 14.9 12.4 15.7 12.4C14.9 12.4 14.4 12.9 14.4 13.8V15C14.4 16.2 14.3 17 13.2 17M11 9.3V15.5" fill="none" stroke="#b4b9bd" stroke-width="1.2"/></svg>
<div class="t" style="left:80px;top:599px;">oh-package.json5</div>
<svg style="left:61px;top:617px" width="16" height="16" viewBox="0 0 16 16"><path d="M2.9 5.7L6.9 1.9V5.7Z" fill="#9aa5ad"/><path d="M7.7 2H13.1V16H2.9V6.8H7.7Z" fill="#9aa5ad"/><rect x="6.6" y="7.6" width="8.8" height="9.6" rx="2.5" fill="#2f3133"/><path d="M8.8 7.8C7.7 7.8 7.6 8.6 7.6 9.8V11C7.6 11.9 7.1 12.4 6.3 12.4C7.1 12.4 7.6 12.9 7.6 13.8V15C7.6 16.2 7.7 17 8.8 17M13.2 7.8C14.3 7.8 14.4 8.6 14.4 9.8V11C14.4 11.9 14.9 12.4 15.7 12.4C14.9 12.4 14.4 12.9 14.4 13.8V15C14.4 16.2 14.3 17 13.2 17M11 9.3V15.5" fill="none" stroke="#2f3133" stroke-width="2.4"/><path d="M8.8 7.8C7.7 7.8 7.6 8.6 7.6 9.8V11C7.6 11.9 7.1 12.4 6.3 12.4C7.1 12.4 7.6 12.9 7.6 13.8V15C7.6 16.2 7.7 17 8.8 17M13.2 7.8C14.3 7.8 14.4 8.6 14.4 9.8V11C14.4 11.9 14.9 12.4 15.7 12.4C14.9 12.4 14.4 12.9 14.4 13.8V15C14.4 16.2 14.3 17 13.2 17M11 9.3V15.5" fill="none" stroke="#b4b9bd" stroke-width="1.2"/></svg>
<div class="t" style="left:80px;top:619px;">oh-package-lock.json5</div>
<svg style="left:61px;top:637px" width="16" height="16" viewBox="0 0 16 16"><path d="M2.9 5.7L6.9 1.9V5.7Z" fill="#9aa5ad"/><path d="M7.7 2H13.1V9.5H2.9V6.8H7.7Z" fill="#9aa5ad"/><rect x="0" y="10" width="16" height="7" fill="#3d8fb8"/><text x="1.6" y="16.2" font-size="6.3" font-family="Liberation Sans" font-weight="bold" fill="#c9dbe6">MD</text></svg>
<div class="t" style="left:80px;top:639px;">ohosTest.md</div>
<svg style="left:61px;top:657px" width="16" height="16" viewBox="0 0 16 16"><path d="M2.9 5.7L6.9 1.9V5.7Z" fill="#9aa5ad"/><path d="M7.7 2H13.1V9.5H2.9V6.8H7.7Z" fill="#9aa5ad"/><rect x="0" y="10" width="16" height="7" fill="#3d8fb8"/><text x="1.6" y="16.2" font-size="6.3" font-family="Liberation Sans" font-weight="bold" fill="#c9dbe6">MD</text></svg>
<div class="t" style="left:80px;top:659px;">README_zh.md</div>
<svg style="left:27.0px;top:681.3px" width="6" height="10" viewBox="0 0 6 10"><path d="M.8 .5L4.8 4.5L.8 8.5" fill="none" stroke="#9fb2b3" stroke-width="1.1"/></svg>
<svg style="left:44px;top:679px" width="16" height="16" viewBox="0 0 16 16"><path d="M1.5 3V14M4.5 3V14M7.5 1V14M10.5 3V14" stroke="#afb1b3" stroke-width="1.6"/><path d="M13.5 4V14" stroke="#3592c4" stroke-width="1.8"/></svg>
<div class="t" style="left:62px;top:679px;">External Libraries</div>
<svg style="left:44px;top:699px" width="18" height="16" viewBox="0 0 18 16"><rect x="0" y="1" width="11" height="10" fill="#9aa5ad"/><path d="M2 3.5L5 6L2 8.5" fill="none" stroke="#3c3f41" stroke-width="1.3"/><circle cx="12" cy="11" r="5" fill="#3c3f41"/><circle cx="12" cy="11" r="4.2" fill="#3592c4"/><path d="M12 8.5V11.3L13.8 12.5" fill="none" stroke="#dbe8f0" stroke-width="1.1"/></svg>
<div class="t" style="left:62px;top:699px;">Scratches and Consoles</div>
<svg style="left:503px;top:53px" width="16" height="16" viewBox="0 0 16 16"><path d="M2.9 5.7L6.9 1.9V5.7Z" fill="#9aa5ad"/><path d="M7.7 2H13.1V16H2.9V6.8H7.7Z" fill="#9aa5ad"/><rect x="6.6" y="7.6" width="8.8" height="9.6" rx="2.5" fill="#2f3133"/><path d="M8.8 7.8C7.7 7.8 7.6 8.6 7.6 9.8V11C7.6 11.9 7.1 12.4 6.3 12.4C7.1 12.4 7.6 12.9 7.6 13.8V15C7.6 16.2 7.7 17 8.8 17M13.2 7.8C14.3 7.8 14.4 8.6 14.4 9.8V11C14.4 11.9 14.9 12.4 15.7 12.4C14.9 12.4 14.4 12.9 14.4 13.8V15C14.4 16.2 14.3 17 13.2 17M11 9.3V15.5" fill="none" stroke="#2f3133" stroke-width="2.4"/><path d="M8.8 7.8C7.7 7.8 7.6 8.6 7.6 9.8V11C7.6 11.9 7.1 12.4 6.3 12.4C7.1 12.4 7.6 12.9 7.6 13.8V15C7.6 16.2 7.7 17 8.8 17M13.2 7.8C14.3 7.8 14.4 8.6 14.4 9.8V11C14.4 11.9 14.9 12.4 15.7 12.4C14.9 12.4 14.4 12.9 14.4 13.8V15C14.4 16.2 14.3 17 13.2 17M11 9.3V15.5" fill="none" stroke="#b4b9bd" stroke-width="1.2"/></svg>
<div class="t" style="left:523px;top:55px;letter-spacing:.19px">entry\build-profile.json5</div>
<svg style="left:670px;top:58px" width="9" height="9" viewBox="0 0 9 9"><path d="M.5 .5L8 8M8 .5L.5 8" stroke="#6e7072" stroke-width="1.1"/></svg>
<svg style="left:693px;top:53px" width="16" height="16" viewBox="0 0 16 16"><path d="M2.9 5.7L6.9 1.9V5.7Z" fill="#9aa5ad"/><path d="M7.7 2H13.1V16H2.9V6.8H7.7Z" fill="#9aa5ad"/><rect x="6.6" y="7.6" width="8.8" height="9.6" rx="2.5" fill="#2f3133"/><path d="M8.8 7.8C7.7 7.8 7.6 8.6 7.6 9.8V11C7.6 11.9 7.1 12.4 6.3 12.4C7.1 12.4 7.6 12.9 7.6 13.8V15C7.6 16.2 7.7 17 8.8 17M13.2 7.8C14.3 7.8 14.4 8.6 14.4 9.8V11C14.4 11.9 14.9 12.4 15.7 12.4C14.9 12.4 14.4 12.9 14.4 13.8V15C14.4 16.2 14.3 17 13.2 17M11 9.3V15.5" fill="none" stroke="#2f3133" stroke-width="2.4"/><path d="M8.8 7.8C7.7 7.8 7.6 8.6 7.6 9.8V11C7.6 11.9 7.1 12.4 6.3 12.4C7.1 12.4 7.6 12.9 7.6 13.8V15C7.6 16.2 7.7 17 8.8 17M13.2 7.8C14.3 7.8 14.4 8.6 14.4 9.8V11C14.4 11.9 14.9 12.4 15.7 12.4C14.9 12.4 14.4 12.9 14.4 13.8V15C14.4 16.2 14.3 17 13.2 17M11 9.3V15.5" fill="none" stroke="#b4b9bd" stroke-width="1.2"/></svg>
<div class="t" style="left:713px;top:55px;letter-spacing:0px">module.json5</div>
<svg style="left:798px;top:58px" width="9" height="9" viewBox="0 0 9 9"><path d="M.5 .5L8 8M8 .5L.5 8" stroke="#6e7072" stroke-width="1.1"/></svg>
<svg style="left:821px;top:53px" width="16" height="16" viewBox="0 0 16 16"><path d="M2.9 5.7L6.9 1.9V5.7Z" fill="#9aa5ad"/><path d="M7.7 2H13.1V16H2.9V6.8H7.7Z" fill="#9aa5ad"/><rect x="6.6" y="7.6" width="8.8" height="9.6" rx="2.5" fill="#2f3133"/><path d="M8.8 7.8C7.7 7.8 7.6 8.6 7.6 9.8V11C7.6 11.9 7.1 12.4 6.3 12.4C7.1 12.4 7.6 12.9 7.6 13.8V15C7.6 16.2 7.7 17 8.8 17M13.2 7.8C14.3 7.8 14.4 8.6 14.4 9.8V11C14.4 11.9 14.9 12.4 15.7 12.4C14.9 12.4 14.4 12.9 14.4 13.8V15C14.4 16.2 14.3 17 13.2 17M11 9.3V15.5" fill="none" stroke="#2f3133" stroke-width="2.4"/><path d="M8.8 7.8C7.7 7.8 7.6 8.6 7.6 9.8V11C7.6 11.9 7.1 12.4 6.3 12.4C7.1 12.4 7.6 12.9 7.6 13.8V15C7.6 16.2 7.7 17 8.8 17M13.2 7.8C14.3 7.8 14.4 8.6 14.4 9.8V11C14.4 11.9 14.9 12.4 15.7 12.4C14.9 12.4 14.4 12.9 14.4 13.8V15C14.4 16.2 14.3 17 13.2 17M11 9.3V15.5" fill="none" stroke="#b4b9bd" stroke-width="1.2"/></svg>
<div class="t" style="left:841px;top:55px;color:#5f9bd6;letter-spacing:.16px">build-profile.json5</div>
<svg style="left:954px;top:58px" width="9" height="9" viewBox="0 0 9 9"><path d="M.5 .5L8 8M8 .5L.5 8" stroke="#6e7072" stroke-width="1.1"/></svg>
<svg style="left:977px;top:53px" width="16" height="16" viewBox="0 0 16 16"><path d="M2.9 5.7L6.9 1.9V5.7Z" fill="#9aa5ad"/><path d="M7.7 2H13.1V16H2.9V6.8H7.7Z" fill="#9aa5ad"/><rect x="6.6" y="7.6" width="8.8" height="9.6" rx="2.5" fill="#2f3133"/><path d="M8.8 7.8C7.7 7.8 7.6 8.6 7.6 9.8V11C7.6 11.9 7.1 12.4 6.3 12.4C7.1 12.4 7.6 12.9 7.6 13.8V15C7.6 16.2 7.7 17 8.8 17M13.2 7.8C14.3 7.8 14.4 8.6 14.4 9.8V11C14.4 11.9 14.9 12.4 15.7 12.4C14.9 12.4 14.4 12.9 14.4 13.8V15C14.4 16.2 14.3 17 13.2 17M11 9.3V15.5" fill="none" stroke="#2f3133" stroke-width="2.4"/><path d="M8.8 7.8C7.7 7.8 7.6 8.6 7.6 9.8V11C7.6 11.9 7.1 12.4 6.3 12.4C7.1 12.4 7.6 12.9 7.6 13.8V15C7.6 16.2 7.7 17 8.8 17M13.2 7.8C14.3 7.8 14.4 8.6 14.4 9.8V11C14.4 11.9 14.9 12.4 15.7 12.4C14.9 12.4 14.4 12.9 14.4 13.8V15C14.4 16.2 14.3 17 13.2 17M11 9.3V15.5" fill="none" stroke="#b4b9bd" stroke-width="1.2"/></svg>
<div class="t" style="left:997px;top:55px;letter-spacing:0px">app.json5</div>
<svg style="left:1061px;top:58px" width="9" height="9" viewBox="0 0 9 9"><path d="M.5 .5L8 8M8 .5L.5 8" stroke="#6e7072" stroke-width="1.1"/></svg>
<svg style="left:1863px;top:55px" width="6" height="14" viewBox="0 0 6 14"><circle cx="3" cy="2" r="1.5" fill="#afb1b3"/><circle cx="3" cy="7" r="1.5" fill="#afb1b3"/><circle cx="3" cy="12" r="1.5" fill="#afb1b3"/></svg>
<div class="t" style="left:505px;top:82px;color:#d0d4d8;letter-spacing:.1px">Core configuration attributes have changed since last project sync. A project sync may be necessary for the IDE to work properly.</div>
<div class="t" style="left:1809px;top:82px;color:#589df6;font-size:12.7px">Sync Now</div>
<div class="a" style="left:554px;top:545px;width:1324px;height:22px;background:#323232;"></div>
<div class="a" style="left:1519px;top:545px;width:1px;height:22px;background:#414141;"></div>
<div class="a" style="left:573px;top:237px;width:1px;height:550px;background:#393939;"></div>
<div class="a" style="left:573px;top:831px;width:1px;height:116px;background:#393939;"></div>
<div class="a" style="left:589px;top:259px;width:1px;height:264px;background:#393939;"></div>
<div class="a" style="left:589px;top:611px;width:1px;height:154px;background:#393939;"></div>
<div class="a" style="left:589px;top:853px;width:1px;height:94px;background:#393939;"></div>
<div class="a" style="left:605px;top:281px;width:1px;height:220px;background:#393939;"></div>
<div class="a" style="left:605px;top:633px;width:1px;height:110px;background:#393939;"></div>
<div class="a" style="left:605px;top:919px;width:1px;height:28px;background:#393939;"></div>
<div class="a" style="left:621px;top:325px;width:1px;height:154px;background:#393939;"></div>
<div class="a" style="left:621px;top:941px;width:1px;height:6px;background:#393939;"></div>
<svg style="left:545px;top:0px" width="20" height="960" viewBox="0 0 20 960"><path d="M4.5 200.5H12.5V207.5L8.5 211.5L4.5 207.5Z" fill="#313335" stroke="#6f7173" stroke-width="1"/><path d="M6.5 204.5H10.5" stroke="#6f7173" stroke-width="1"/><path d="M4.5 222.5H12.5V229.5L8.5 233.5L4.5 229.5Z" fill="#313335" stroke="#6f7173" stroke-width="1"/><path d="M6.5 226.5H10.5" stroke="#6f7173" stroke-width="1"/><path d="M4.5 244.5H12.5V251.5L8.5 255.5L4.5 251.5Z" fill="#313335" stroke="#6f7173" stroke-width="1"/><path d="M6.5 248.5H10.5" stroke="#6f7173" stroke-width="1"/><path d="M4.5 266.5H12.5V273.5L8.5 277.5L4.5 273.5Z" fill="#313335" stroke="#6f7173" stroke-width="1"/><path d="M6.5 270.5H10.5" stroke="#6f7173" stroke-width="1"/><path d="M4.5 310.5H12.5V317.5L8.5 321.5L4.5 317.5Z" fill="#313335" stroke="#6f7173" stroke-width="1"/><path d="M6.5 314.5H10.5" stroke="#6f7173" stroke-width="1"/><path d="M4.5 596.5H12.5V603.5L8.5 607.5L4.5 603.5Z" fill="#313335" stroke="#6f7173" stroke-width="1"/><path d="M6.5 600.5H10.5" stroke="#6f7173" stroke-width="1"/><path d="M4.5 618.5H12.5V625.5L8.5 629.5L4.5 625.5Z" fill="#313335" stroke="#6f7173" stroke-width="1"/><path d="M6.5 622.5H10.5" stroke="#6f7173" stroke-width="1"/><path d="M4.5 684.5H12.5V691.5L8.5 695.5L4.5 691.5Z" fill="#313335" stroke="#6f7173" stroke-width="1"/><path d="M6.5 688.5H10.5" stroke="#6f7173" stroke-width="1"/><path d="M4.5 816.5H12.5V823.5L8.5 827.5L4.5 823.5Z" fill="#313335" stroke="#6f7173" stroke-width="1"/><path d="M6.5 820.5H10.5" stroke="#6f7173" stroke-width="1"/><path d="M4.5 838.5H12.5V845.5L8.5 849.5L4.5 845.5Z" fill="#313335" stroke="#6f7173" stroke-width="1"/><path d="M6.5 842.5H10.5" stroke="#6f7173" stroke-width="1"/><path d="M4.5 904.5H12.5V911.5L8.5 915.5L4.5 911.5Z" fill="#313335" stroke="#6f7173" stroke-width="1"/><path d="M6.5 908.5H10.5" stroke="#6f7173" stroke-width="1"/><path d="M4.5 926.5H12.5V933.5L8.5 937.5L4.5 933.5Z" fill="#313335" stroke="#6f7173" stroke-width="1"/><path d="M6.5 930.5H10.5" stroke="#6f7173" stroke-width="1"/><path d="M4.5 164.5H12.5V157.5L8.5 153.5L4.5 157.5Z" fill="#313335" stroke="#6f7173" stroke-width="1"/><path d="M6.5 160.5H10.5" stroke="#6f7173" stroke-width="1"/><path d="M4.5 494.5H12.5V487.5L8.5 483.5L4.5 487.5Z" fill="#313335" stroke="#6f7173" stroke-width="1"/><path d="M6.5 490.5H10.5" stroke="#6f7173" stroke-width="1"/><path d="M4.5 516.5H12.5V509.5L8.5 505.5L4.5 509.5Z" fill="#313335" stroke="#6f7173" stroke-width="1"/><path d="M6.5 512.5H10.5" stroke="#6f7173" stroke-width="1"/><path d="M4.5 538.5H12.5V531.5L8.5 527.5L4.5 531.5Z" fill="#313335" stroke="#6f7173" stroke-width="1"/><path d="M6.5 534.5H10.5" stroke="#6f7173" stroke-width="1"/><path d="M4.5 736.5H12.5V729.5L8.5 725.5L4.5 729.5Z" fill="#313335" stroke="#6f7173" stroke-width="1"/><path d="M6.5 732.5H10.5" stroke="#6f7173" stroke-width="1"/><path d="M4.5 758.5H12.5V751.5L8.5 747.5L4.5 751.5Z" fill="#313335" stroke="#6f7173" stroke-width="1"/><path d="M6.5 754.5H10.5" stroke="#6f7173" stroke-width="1"/><path d="M4.5 780.5H12.5V773.5L8.5 769.5L4.5 773.5Z" fill="#313335" stroke="#6f7173" stroke-width="1"/><path d="M6.5 776.5H10.5" stroke="#6f7173" stroke-width="1"/><path d="M4.5 802.5H12.5V795.5L8.5 791.5L4.5 795.5Z" fill="#313335" stroke="#6f7173" stroke-width="1"/><path d="M6.5 798.5H10.5" stroke="#6f7173" stroke-width="1"/></svg>
<svg style="left:567px;top:546px" width="12" height="16" viewBox="0 0 12 16"><path d="M5.5 .5A5 5 0 0 1 10.5 5.5C10.5 8 8.5 9 8.5 10.5H2.5C2.5 9 .5 8 .5 5.5A5 5 0 0 1 5.5 .5Z" fill="#f4af3d"/><path d="M2.6 12.2H8.4M3.2 14.2H7.8" stroke="#e6e6e6" stroke-width="1.1"/></svg>
<div class="ln" style="left:484px;top:107px;color:#606366">12</div>
<div class="code" style="left:558.5px;top:106px"><span class="c"> * See the License for the specific language governing permissions and</span></div>
<div class="ln" style="left:484px;top:129px;color:#606366">13</div>
<div class="code" style="left:558.5px;top:128px"><span class="c"> * limitations under the License.</span></div>
<div class="ln" style="left:484px;top:151px;color:#606366">14</div>
<div class="code" style="left:558.5px;top:150px"><span class="c"> */</span></div>
<div class="ln" style="left:484px;top:173px;color:#606366">15</div>
<div class="code" style="left:558.5px;top:172px"></div>
<div class="ln" style="left:484px;top:195px;color:#606366">16</div>
<div class="code" style="left:558.5px;top:194px">{</div>
<div class="ln" style="left:484px;top:217px;color:#606366">17</div>
<div class="code" style="left:558.5px;top:216px">  <span class="k">&quot;app&quot;</span><span class="p">:</span> {</div>
<div class="ln" style="left:484px;top:239px;color:#606366">18</div>
<div class="code" style="left:558.5px;top:238px">    <span class="k">&quot;signingConfigs&quot;</span><span class="p">:</span> [</div>
<div class="ln" style="left:484px;top:261px;color:#606366">19</div>
<div class="code" style="left:558.5px;top:260px">      {</div>
<div class="ln" style="left:484px;top:283px;color:#606366">20</div>
<div class="code" style="left:558.5px;top:282px">        <span class="k">&quot;name&quot;</span><span class="p">:</span> <span class="s">&quot;default&quot;</span><span class="p">,</span></div>
<div class="ln" style="left:484px;top:305px;color:#606366">21</div>
<div class="code" style="left:558.5px;top:304px">        <span class="k">&quot;material&quot;</span><span class="p">:</span> {</div>
<div class="ln" style="left:484px;top:327px;color:#606366">22</div>
<div class="code" style="left:558.5px;top:326px">          <span class="k">&quot;certpath&quot;</span><span class="p">:</span> <span class="s">&quot;C:</span><span class="p">\\</span><span class="s">Users</span><span class="p">\\</span><span class="s">Administrator</span><span class="p">\\</span><span class="s">.ohos</span><span class="p">\\</span><span class="s">config</span><span class="p">\\</span><span class="s">openharmony</span><span class="p">\\</span><span class="s">auto_ohos_default_Browser_ohos.samples.browser1.cer&quot;</span><span class="p">,</span></div>
<div class="ln" style="left:484px;top:349px;color:#606366">23</div>
<div class="code" style="left:558.5px;top:348px">          <span class="k">&quot;storePassword&quot;</span><span class="p">:</span> <span class="s">&quot;0000001B2B557F32FC9705BBD62E7100833324056749A40413C902535E483ABD34283C1C101A9D66E85955&quot;</span><span class="p">,</span></div>
<div class="ln" style="left:484px;top:371px;color:#606366">24</div>
<div class="code" style="left:558.5px;top:370px">          <span class="k">&quot;keyAlias&quot;</span><span class="p">:</span> <span class="s">&quot;debugKey&quot;</span><span class="p">,</span></div>
<div class="ln" style="left:484px;top:393px;color:#606366">25</div>
<div class="code" style="left:558.5px;top:392px">          <span class="k">&quot;keyPassword&quot;</span><span class="p">:</span> <span class="s">&quot;0000001B0B2F0C90E5A5A69889F495BC3306D12A0E01076B702E8D86C6938897C2767D386891E95B1EB48C&quot;</span><span class="p">,</span></div>
<div class="ln" style="left:484px;top:415px;color:#606366">26</div>
<div class="code" style="left:558.5px;top:414px">          <span class="k">&quot;profile&quot;</span><span class="p">:</span> <span class="s">&quot;C:</span><span class="p">\\</span><span class="s">Users</span><span class="p">\\</span><span class="s">Administrator</span><span class="p">\\</span><span class="s">.ohos</span><span class="p">\\</span><span class="s">config</span><span class="p">\\</span><span class="s">openharmony</span><span class="p">\\</span><span class="s">auto_ohos_default_Browser_ohos.samples.browser1.p7b&quot;</span><span class="p">,</span></div>
<div class="ln" style="left:484px;top:437px;color:#606366">27</div>
<div class="code" style="left:558.5px;top:436px">          <span class="k">&quot;signAlg&quot;</span><span class="p">:</span> <span class="s">&quot;SHA256withECDSA&quot;</span><span class="p">,</span></div>
<div class="ln" style="left:484px;top:459px;color:#606366">28</div>
<div class="code" style="left:558.5px;top:458px">          <span class="k">&quot;storeFile&quot;</span><span class="p">:</span> <span class="s">&quot;C:</span><span class="p">\\</span><span class="s">Users</span><span class="p">\\</span><span class="s">Administrator</span><span class="p">\\</span><span class="s">.ohos</span><span class="p">\\</span><span class="s">config</span><span class="p">\\</span><span class="s">openharmony</span><span class="p">\\</span><span class="s">auto_ohos_default_Browser_ohos.samples.browser1.p12&quot;</span></div>
<div class="ln" style="left:484px;top:481px;color:#606366">29</div>
<div class="code" style="left:558.5px;top:480px">        }</div>
<div class="ln" style="left:484px;top:503px;color:#606366">30</div>
<div class="code" style="left:558.5px;top:502px">      }</div>
<div class="ln" style="left:484px;top:525px;color:#606366">31</div>
<div class="code" style="left:558.5px;top:524px">    ]<span class="p">,</span></div>
<div class="ln" style="left:484px;top:547px;color:#a4a3a3">32</div>
<div class="code" style="left:558.5px;top:546px">    <span class="k">&quot;compileSdkVersion&quot;</span><span class="p">:</span> <span class="n">9</span><span class="p">,</span></div>
<div class="ln" style="left:484px;top:569px;color:#606366">33</div>
<div class="code" style="left:558.5px;top:568px">    <span class="k">&quot;compatibleSdkVersion&quot;</span><span class="p">:</span> <span class="n">9</span><span class="p">,</span></div>
<div class="ln" style="left:484px;top:591px;color:#606366">34</div>
<div class="code" style="left:558.5px;top:590px">    <span class="k">&quot;products&quot;</span><span class="p">:</span> [</div>
<div class="ln" style="left:484px;top:613px;color:#606366">35</div>
<div class="code" style="left:558.5px;top:612px">      {</div>
<div class="ln" style="left:484px;top:635px;color:#606366">36</div>
<div class="code" style="left:558.5px;top:634px">        <span class="k">&quot;name&quot;</span><span class="p">:</span> <span class="s">&quot;default&quot;</span><span class="p">,</span></div>
<div class="ln" style="left:484px;top:657px;color:#606366">37</div>
<div class="code" style="left:558.5px;top:656px">        <span class="k">&quot;signingConfig&quot;</span><span class="p">:</span> <span class="s">&quot;default&quot;</span><span class="p">,</span></div>
<div class="ln" style="left:484px;top:679px;color:#606366">38</div>
<div class="code" style="left:558.5px;top:678px"><span class="c">//        &quot;compileSdkVersion&quot;: 10,</span></div>
<div class="ln" style="left:484px;top:701px;color:#606366">39</div>
<div class="code" style="left:558.5px;top:700px"><span class="c">//        &quot;compatibleSdkVersion&quot;: 9,</span></div>
<div class="ln" style="left:484px;top:723px;color:#606366">40</div>
<div class="code" style="left:558.5px;top:722px"><span class="c">//        &quot;runtimeOS&quot;: &quot;OpenHarmony&quot;</span></div>
<div class="ln" style="left:484px;top:745px;color:#606366">41</div>
<div class="code" style="left:558.5px;top:744px">      }</div>
<div class="ln" style="left:484px;top:767px;color:#606366">42</div>
<div class="code" style="left:558.5px;top:766px">    ]</div>
<div class="ln" style="left:484px;top:789px;color:#606366">43</div>
<div class="code" style="left:558.5px;top:788px">  }<span class="p">,</span></div>
<div class="ln" style="left:484px;top:811px;color:#606366">44</div>
<div class="code" style="left:558.5px;top:810px">  <span class="k">&quot;modules&quot;</span><span class="p">:</span> [</div>
<div class="ln" style="left:484px;top:833px;color:#606366">45</div>
<div class="code" style="left:558.5px;top:832px">    {</div>
<div class="ln" style="left:484px;top:855px;color:#606366">46</div>
<div class="code" style="left:558.5px;top:854px">      <span class="k">&quot;name&quot;</span><span class="p">:</span> <span class="s">&quot;entry&quot;</span><span class="p">,</span></div>
<div class="ln" style="left:484px;top:877px;color:#606366">47</div>
<div class="code" style="left:558.5px;top:876px">      <span class="k">&quot;srcPath&quot;</span><span class="p">:</span> <span class="s">&quot;./entry&quot;</span><span class="p">,</span></div>
<div class="ln" style="left:484px;top:899px;color:#606366">48</div>
<div class="code" style="left:558.5px;top:898px">      <span class="k">&quot;targets&quot;</span><span class="p">:</span> [</div>
<div class="ln" style="left:484px;top:921px;color:#606366">49</div>
<div class="code" style="left:558.5px;top:920px">        {</div>
<div class="a" style="left:766px;top:547px;width:2px;height:18px;background:#bbbbbb;"></div>
<svg style="left:1070.5px;top:343px" width="88" height="3" viewBox="0 0 88 3"><path d="M0 0.5L2 2L4 0L6 2L8 0L10 2L12 0L14 2L16 0L18 2L20 0L22 2L24 0L26 2L28 0L30 2L32 0L34 2L36 0L38 2L40 0L42 2L44 0L46 2L48 0L50 2L52 0L54 2L56 0L58 2L60 0L62 2L64 0L66 2L68 0L70 2L72 0L74 2L76 0L78 2L80 0L82 2L84 0L86 2L88 0" fill="none" stroke="#6a9a6e" stroke-width=".9" opacity=".85"/></svg>
<svg style="left:1062.5px;top:431px" width="88" height="3" viewBox="0 0 88 3"><path d="M0 0.5L2 2L4 0L6 2L8 0L10 2L12 0L14 2L16 0L18 2L20 0L22 2L24 0L26 2L28 0L30 2L32 0L34 2L36 0L38 2L40 0L42 2L44 0L46 2L48 0L50 2L52 0L54 2L56 0L58 2L60 0L62 2L64 0L66 2L68 0L70 2L72 0L74 2L76 0L78 2L80 0L82 2L84 0L86 2L88 0" fill="none" stroke="#6a9a6e" stroke-width=".9" opacity=".85"/></svg>
<svg style="left:1078.5px;top:475px" width="88" height="3" viewBox="0 0 88 3"><path d="M0 0.5L2 2L4 0L6 2L8 0L10 2L12 0L14 2L16 0L18 2L20 0L22 2L24 0L26 2L28 0L30 2L32 0L34 2L36 0L38 2L40 0L42 2L44 0L46 2L48 0L50 2L52 0L54 2L56 0L58 2L60 0L62 2L64 0L66 2L68 0L70 2L72 0L74 2L76 0L78 2L80 0L82 2L84 0L86 2L88 0" fill="none" stroke="#6a9a6e" stroke-width=".9" opacity=".85"/></svg>
<div class="a" style="left:1869px;top:271px;width:8px;height:487px;background:#4e4e4e;border-radius:0"></div>
<svg style="left:1807px;top:111px" width="14" height="14" viewBox="0 0 14 14"><path d="M1 6L4.5 9.5L11.5 1.5" fill="none" stroke="#3fa94e" stroke-width="2.4"/><path d="M1 12.5L3 10.5L5 12.5L7 10.5L9 12.5L11 10.5" fill="none" stroke="#3fa94e" stroke-width="1"/></svg>
<div class="t" style="left:1823px;top:109px;font-size:12.5px">3</div>
<svg style="left:1840px;top:114px" width="10" height="6" viewBox="0 0 10 6"><path d="M.5 5L5 .5L9.5 5" fill="none" stroke="#afb1b3" stroke-width="1.2"/></svg>
<svg style="left:1862px;top:115px" width="10" height="6" viewBox="0 0 10 6"><path d="M.5 .5L5 5L9.5 .5" fill="none" stroke="#afb1b3" stroke-width="1.2"/></svg>
<svg style="left:1883px;top:60px" width="12" height="10" viewBox="0 0 12 10"><path d="M1 8C2.5 7 2.5 5.5 2.5 4A3.5 3.5 0 0 1 9.5 4C9.5 5.5 9.5 7 11 8Z" fill="#afb1b3"/><circle cx="6" cy="9" r="1.3" fill="#afb1b3"/></svg>
<div class="vt" style="left:1896px;top:78px;transform:rotate(90deg);color:#bbbbbb;font-size:12.2px">Notifications</div>
<svg style="left:1882px;top:169px" width="14" height="9" viewBox="0 0 14 9"><path d="M.5 4.5C3 .5 11 .5 13.5 4.5C11 8.5 3 8.5 .5 4.5Z" fill="#afb1b3"/><circle cx="7" cy="4.5" r="2.4" fill="#3c3f41"/><circle cx="7" cy="4.5" r="1.2" fill="#afb1b3"/></svg>
<div class="vt" style="left:1896px;top:184px;transform:rotate(90deg);color:#bbbbbb;font-size:11.3px">Previewer</div>
<svg style="left:1884px;top:839px" width="9" height="12" viewBox="0 0 9 12"><rect x=".7" y=".7" width="7" height="10" fill="none" stroke="#afb1b3" stroke-width="1.4"/></svg>
<div class="vt" style="left:1896px;top:858px;transform:rotate(90deg);color:#bbbbbb;font-size:11.1px">Device File Browser</div>
<div class="t" style="left:505px;top:952px;">app</div>
<svg style="left:538px;top:955px" width="6" height="10" viewBox="0 0 6 10"><path d="M1 1L4.5 5L1 9" fill="none" stroke="#6e7072" stroke-width="1"/></svg>
<div class="t" style="left:552px;top:952px;">compileSdkVersion</div>
<div class="t" style="left:45px;top:976px;font-size:11.6px">Git</div>
<svg style="left:29px;top:977px" width="12" height="16" viewBox="0 0 12 16"><circle cx="2.6" cy="2.3" r="1.6" fill="#afb1b3"/><circle cx="2.6" cy="10.5" r="1.6" fill="#afb1b3"/><circle cx="8.6" cy="4.3" r="1.6" fill="#afb1b3"/><path d="M2.6 2.3V10.5M8.6 4.3C8.6 7.5 2.6 6.5 2.6 9.5" fill="none" stroke="#afb1b3" stroke-width="1.5"/></svg>
<div class="t" style="left:95px;top:976px;font-size:11.6px">Run</div>
<svg style="left:79px;top:977px" width="12" height="16" viewBox="0 0 12 16"><path d="M1 1.5L9 6.3L1 11.2Z" fill="#afb1b3"/><circle cx="10.2" cy="10.8" r="2.5" fill="#3c3f41"/><circle cx="10.2" cy="10.8" r="1.9" fill="#3fa94e"/></svg>
<div class="t" style="left:152px;top:976px;font-size:11.6px">TODO</div>
<svg style="left:137px;top:977px" width="12" height="16" viewBox="0 0 12 16"><path d="M0 3H2M0 6.5H2M0 10H2M3.5 3H11M3.5 6.5H11M3.5 10H11" stroke="#afb1b3" stroke-width="1.7"/></svg>
<div class="t" style="left:221px;top:976px;font-size:11.6px">Problems</div>
<svg style="left:205px;top:977px" width="12" height="16" viewBox="0 0 12 16"><circle cx="5.5" cy="6" r="5.5" fill="#afb1b3"/><path d="M5.5 2.5V7" stroke="#3c3f41" stroke-width="1.6"/><circle cx="5.5" cy="9" r="1" fill="#3c3f41"/></svg>
<div class="t" style="left:308px;top:976px;font-size:11.6px">Terminal</div>
<svg style="left:292px;top:977px" width="12" height="16" viewBox="0 0 12 16"><rect x="0" y="1" width="11" height="10" fill="#afb1b3"/><path d="M1.8 3.2L4.5 5.5L1.8 7.8M5 9.2H9" fill="none" stroke="#3c3f41" stroke-width="1.2"/></svg>
<div class="t" style="left:390px;top:976px;font-size:11.6px">Log</div>
<svg style="left:372px;top:977px" width="14" height="16" viewBox="0 0 14 16"><rect x="0.5" y="1.5" width="13" height="10.5" fill="#afb1b3"/><path d="M3 0V2M10.5 0V2" stroke="#afb1b3" stroke-width="1.6"/><path d="M3 5H11M3 7.5H11M3 10H8" stroke="#3c3f41" stroke-width="1.1"/></svg>
<div class="t" style="left:447px;top:976px;font-size:11.6px">Code Linter</div>
<svg style="left:430px;top:977px" width="14" height="16" viewBox="0 0 14 16"><circle cx="6" cy="6.5" r="5" fill="none" stroke="#afb1b3" stroke-width="1.6"/><path d="M9.5 10L12.5 13" stroke="#afb1b3" stroke-width="2"/><path d="M5 5L3.5 6.5L5 8M7 5L8.5 6.5L7 8" fill="none" stroke="#afb1b3" stroke-width="1"/></svg>
<div class="t" style="left:547px;top:976px;font-size:11.6px">Profiler</div>
<svg style="left:527px;top:977px" width="16" height="16" viewBox="0 0 16 16"><path d="M10 2.5A5.5 5.5 0 1 0 4 11.5" fill="none" stroke="#afb1b3" stroke-width="1.5"/><path d="M5.5 4.5V9" stroke="#afb1b3" stroke-width="1.5"/><circle cx="11" cy="10" r="3" fill="none" stroke="#afb1b3" stroke-width="1.5"/><path d="M13 12L15 14" stroke="#afb1b3" stroke-width="1.5"/></svg>
<div class="t" style="left:623px;top:976px;font-size:11.6px">Services</div>
<svg style="left:606px;top:977px" width="14" height="16" viewBox="0 0 14 16"><path d="M3.3 1H9.7L13 6.5L9.7 12H3.3L0 6.5Z" fill="#afb1b3"/><path d="M5 3.5L9.5 6.5L5 9.5Z" fill="#3c3f41"/></svg>
<div class="t" style="left:705px;top:976px;font-size:11.6px">ArkUI Inspector</div>
<svg style="left:688px;top:977px" width="13" height="16" viewBox="0 0 13 16"><rect x="0" y="1" width="12" height="3" fill="#afb1b3"/><rect x="0" y="5" width="4" height="7" fill="#afb1b3"/><rect x="5" y="5" width="7" height="2" fill="#afb1b3"/><rect x="5" y="8" width="7" height="2" fill="#afb1b3"/><rect x="5" y="11" width="7" height="1.5" fill="#afb1b3"/></svg>
<svg style="left:3px;top:997px" width="16" height="16" viewBox="0 0 16 16"><rect x="2.9" y="1.9" width="9.2" height="9.2" fill="none" stroke="#afb1b3" stroke-width="1.1"/><path d="M.9 4.5V13.6H10.5" fill="none" stroke="#afb1b3" stroke-width="1.1"/></svg>
<div class="t" style="left:24px;top:997px;">Sync project finished in 5 s 307 ms (2 minutes ago)</div>
<svg style="left:1382px;top:998px" width="12" height="12" viewBox="0 0 12 12"><circle cx="6" cy="6" r="6" fill="#3fa94e"/></svg>
<svg style="left:1448px;top:997px" width="15" height="15" viewBox="0 0 15 15"><rect x="0" y="0" width="7" height="7" fill="#e8772e"/><rect x="7.5" y="0" width="7" height="7" fill="#6ba63f"/><rect x="0" y="7.5" width="7" height="7" fill="#3c9be0"/><rect x="7.5" y="7.5" width="7" height="7" fill="#f4c02e"/></svg>
<div class="t" style="left:1406px;top:997px;letter-spacing:-0.4px">32:27</div>
<div class="t" style="left:1473px;top:997px;letter-spacing:0px">LF</div>
<div class="t" style="left:1497px;top:997px;letter-spacing:-0.7px">UTF-8</div>
<div class="t" style="left:1543px;top:997px;letter-spacing:-0.25px">2 spaces</div>
<div class="t" style="left:1606px;top:997px;letter-spacing:0.17px">JSON: ohos-project-build-profile</div>
<div class="t" style="left:1826px;top:997px;letter-spacing:0px">master</div>
<svg style="left:1810px;top:997px" width="11" height="16" viewBox="0 0 11 16"><circle cx="2" cy="2" r="1.5" fill="#afb1b3"/><circle cx="2" cy="13" r="1.5" fill="#afb1b3"/><circle cx="8.5" cy="3" r="1.5" fill="#afb1b3"/><path d="M2 2V13M8.5 3C8.5 8 2 7 2 11" fill="none" stroke="#afb1b3" stroke-width="1.4"/></svg>
<svg style="left:1876px;top:997px" width="17" height="16" viewBox="0 0 17 16"><rect x="0" y="8" width="10" height="7" fill="#afb1b3"/><path d="M7.5 8V5A3 3 0 0 1 13.5 5V7" fill="none" stroke="#afb1b3" stroke-width="1.6"/></svg>
</body></html>
